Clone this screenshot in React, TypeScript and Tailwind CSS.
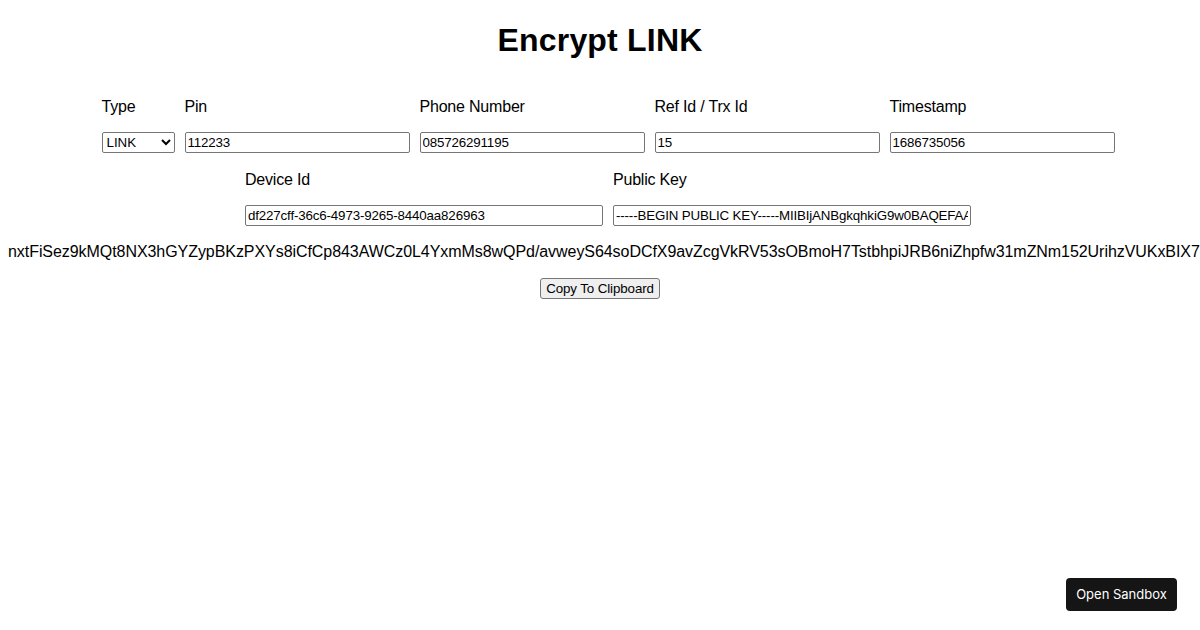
import { useState } from 'react';

const cipher =
  'nxtFiSez9kMQt8NX3hGYZypBKzPXYs8iCfCp843AWCz0L4YxmMs8wQPd/avweyS64soDCfX9avZcgVkRV53sOBmoH7TstbhpiJRB6niZhpfw31mZNm152UrihzVUKxBIX7qLwT0aPe2Ms9Yd4kHcR1oJfV8sQzX/==';

export default function App() {
  const [type, setType] = useState('LINK');
  const [pin, setPin] = useState('112233');
  const [phone, setPhone] = useState('085726291195');
  const [refId, setRefId] = useState('15');
  const [timestamp, setTimestamp] = useState('1686735056');
  const [deviceId, setDeviceId] = useState('df227cff-36c6-4973-9265-8440aa826963');
  const [publicKey, setPublicKey] = useState(
    '-----BEGIN PUBLIC KEY-----MIIBIjANBgkqhkiG9w0BAQEFAAOCAQ8AMIIBCgKCAQEA'
  );

  const inputClass =
    'h-[21px] border border-[#767676] rounded-[2px] px-[2px] text-[13.33px] tracking-[-0.15px] text-black bg-white outline-none';
  const labelClass = 'mt-[1px] mb-[16px] text-[16px] leading-[18px] tracking-[-0.2px]';

  const fields = [
    { label: 'Pin', value: pin, set: setPin },
    { label: 'Phone Number', value: phone, set: setPhone },
    { label: 'Ref Id / Trx Id', value: refId, set: setRefId },
    { label: 'Timestamp', value: timestamp, set: setTimestamp },
  ];

  return (
    <div className="min-h-[630px] w-full overflow-hidden bg-white text-black font-['Liberation_Sans',Arial,sans-serif]">
      <h1 className="mt-[22px] text-center text-[32px] leading-[37px] font-bold tracking-[0.2px]">
        Encrypt {type}
      </h1>

      {/* First row */}
      <div className="mt-[38px] flex justify-center gap-[10px] pl-[16px]">
        <div className="flex flex-col">
          <label className={labelClass}>Type</label>
          <select
            value={type}
            onChange={(e) => setType(e.target.value)}
            className="h-[21px] w-[73px] border border-[#767676] rounded-[2px] text-[13.33px] bg-white"
          >
            <option value="LINK">LINK</option>
            <option value="UNLINK">UNLINK</option>
          </select>
        </div>
        {fields.map((f) => (
          <div key={f.label} className="flex flex-col">
            <label className={labelClass}>{f.label}</label>
            <input
              value={f.value}
              onChange={(e) => f.set(e.target.value)}
              className={`${inputClass} w-[225px]`}
            />
          </div>
        ))}
      </div>

      {/* Second row */}
      <div className="mt-[17px] flex justify-center gap-[10px] pl-[16px]">
        <div className="flex flex-col">
          <label className={labelClass}>Device Id</label>
          <input
            value={deviceId}
            onChange={(e) => setDeviceId(e.target.value)}
            className={`${inputClass} w-[358px]`}
          />
        </div>
        <div className="flex flex-col">
          <label className={labelClass}>Public Key</label>
          <input
            value={publicKey}
            onChange={(e) => setPublicKey(e.target.value)}
            className={`${inputClass} w-[358px]`}
          />
        </div>
      </div>

      <p className="mt-[17px] pl-[8px] whitespace-nowrap text-[16px] leading-[18px] tracking-[-0.06px]">
        {cipher}
      </p>

      <div className="mt-[17px] flex justify-center">
        <button
          onClick={() => navigator.clipboard?.writeText(cipher)}
          className="h-[21px] w-[120px] border border-[#767676] rounded-[3px] bg-[#efefef] text-[13.33px] leading-[19px] tracking-[-0.1px]"
        >
          Copy To Clipboard
        </button>
      </div>

      <button className="fixed right-[23px] bottom-[19px] h-[33px] w-[111px] rounded-[4px] bg-[#151515] text-[13px] text-white font-['Inter',sans-serif]">
        Open Sandbox
      </button>
    </div>
  );
}
